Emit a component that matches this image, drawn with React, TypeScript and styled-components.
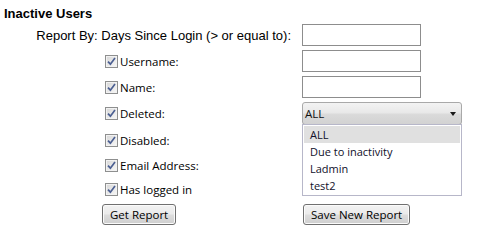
import React from 'react';
import styled, { createGlobalStyle } from 'styled-components';

const GlobalStyle = createGlobalStyle`
  body {
    margin: 0;
    background: #ffffff;
    font-family: "Liberation Sans", Arial, sans-serif;
    color: #000;
  }
`;

const Page = styled.div`
  padding: 6px 0 0 4px;
`;

const Title = styled.h3`
  margin: 0 0 1px 0;
  font-size: 13px;
  line-height: 15px;
  font-weight: bold;
`;

const Form = styled.div`
  display: grid;
  grid-template-columns: 98px 200px 160px;
  grid-template-rows: 26px 26px 26px 27px 27px 23px 25px 25px;
  align-items: center;
`;

const ReportLabel = styled.div`
  grid-column: 1 / 3;
  text-align: right;
  padding-right: 11px;
  font-size: 13px;
  line-height: 15px;
`;

const Field = styled.label`
  grid-column: 2;
  display: flex;
  align-items: center;
  gap: 2px;
  padding-left: 3px;
  font-family: "Open Sans", "Noto Sans", sans-serif;
  font-size: 11.5px;
  line-height: 15px;
`;

const Box = styled.span`
  width: 13px;
  height: 13px;
  box-sizing: border-box;
  border: 1px solid #8e8f8f;
  background: linear-gradient(135deg, #d6d6d6 0%, #eeeeee 70%, #f8f8f8 100%);
  box-shadow: inset 0 0 0 1px #f2f2f2;
  display: flex;
  align-items: center;
  justify-content: center;
`;

const TextInput = styled.input`
  grid-column: 3;
  width: 119px;
  height: 22px;
  box-sizing: border-box;
  border: 1px solid #8d8d8d;
  margin: 0;
  padding: 0 2px;
  background: #fff;
`;

const SelectWrap = styled.div`
  grid-column: 3;
  position: relative;
  height: 23px;
`;

const SelectBox = styled.div`
  height: 23px;
  box-sizing: border-box;
  border: 1px solid #a9a9a9;
  border-radius: 3px;
  background: linear-gradient(#f3f3f3 0%, #e9e9e9 45%, #dadada 55%, #d2d2d2 100%);
  display: flex;
  align-items: center;
  justify-content: space-between;
  padding: 0 5px 0 2px;
  font-family: "Open Sans", "Noto Sans", sans-serif;
  font-size: 11.5px;
  color: #111;
`;

const Arrow = styled.span`
  width: 0;
  height: 0;
  border-left: 3.5px solid transparent;
  border-right: 3.5px solid transparent;
  border-top: 4px solid #1a1a1a;
  margin-top: 1px;
`;

const DropList = styled.ul`
  position: absolute;
  left: 0;
  top: 100%;
  margin: -1px 0 0 0;
  width: 160px;
  box-sizing: border-box;
  padding: 1px;
  list-style: none;
  border: 1px solid #b7b7c9;
  background: #fff;
  z-index: 2;
`;

const Option = styled.li<{ $active?: boolean }>`
  height: 17px;
  line-height: 17px;
  padding-left: 6px;
  font-family: "Open Sans", "Noto Sans", sans-serif;
  font-size: 11px;
  color: #10102a;
  background: ${p => (p.$active ? '#e0e0e0' : 'transparent')};
`;

const Button = styled.button<{ $col: number }>`
  grid-column: ${p => p.$col};
  justify-self: start;
  height: 21px;
  margin: 0 0 0 ${p => (p.$col === 3 ? '1px' : '0')};
  padding: 0 7px;
  border: 1px solid #707070;
  border-radius: 3px;
  background: linear-gradient(#f2f2f2 0%, #ebebeb 48%, #dddddd 52%, #cfcfcf 100%);
  box-shadow: inset 0 0 0 1px #fbfbfb;
  font-family: "Open Sans", "Noto Sans", sans-serif;
  font-size: 11.5px;
  color: #000;
`;

function Check() {
  return (
    <Box>
      <svg width="9" height="9" viewBox="0 0 9 9">
        <path d="M1 4.6 L3.4 7.2 L8 1" fill="none" stroke="#4b5f92" strokeWidth="1.7" />
      </svg>
    </Box>
  );
}

const options = ['ALL', 'Due to inactivity', 'Ladmin', 'test2'];

export default function App() {
  return (
    <Page>
      <GlobalStyle />
      <Title>Inactive Users</Title>
      <Form>
        <ReportLabel>Report By: Days Since Login (&gt; or equal to):</ReportLabel>
        <TextInput />

        <Field><Check />Username:</Field>
        <TextInput />

        <Field><Check />Name:</Field>
        <TextInput />

        <Field><Check />Deleted:</Field>
        <SelectWrap>
          <SelectBox>ALL<Arrow /></SelectBox>
          <DropList>
            {options.map((o, i) => (
              <Option key={o} $active={i === 0}>{o}</Option>
            ))}
          </DropList>
        </SelectWrap>

        <Field><Check />Disabled:</Field>
        <Field><Check />Email Address:</Field>
        <Field><Check />Has logged in</Field>

        <Button $col={2}>Get Report</Button>
        <Button $col={3}>Save New Report</Button>
      </Form>
    </Page>
  );
}
